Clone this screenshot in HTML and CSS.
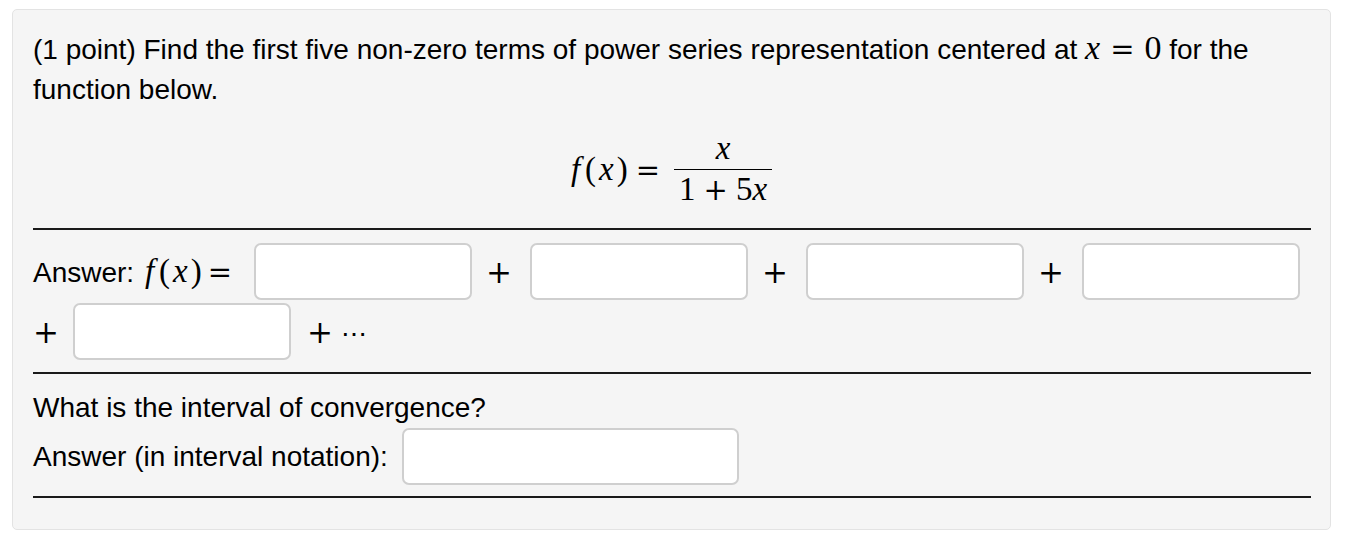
FILE: index.html
```html
<!DOCTYPE html>
<html>
<head>
<meta charset="utf-8">
<link rel="stylesheet" href="styles.css">
</head>
<body>
<div class="card">
  <p class="intro">(1 point) Find the first five non-zero terms of power series representation centered at <span class="m"><i>x</i><span class="op">=</span>0</span> for the function below.</p>
  <div class="display">
    <span class="m big"><i class="f">f</i>(<i class="px">x</i>)<span class="op">=</span></span>
    <span class="frac">
      <span class="num"><i>x</i></span>
      <span class="den">1<span class="op">+</span>5<i>x</i></span>
    </span>
  </div>
  <div class="rule"></div>
  <div class="row">
    <span class="label">Answer: <span class="m"><i class="f">f</i>(<i class="px">x</i>)<span class="op">=</span></span></span>
    <span class="box"></span>
    <span class="plus">+</span>
    <span class="box"></span>
    <span class="plus">+</span>
    <span class="box"></span>
    <span class="plus">+</span>
    <span class="box"></span>
  </div>
  <div class="row row2">
    <span class="plus first">+</span>
    <span class="box"></span>
    <span class="plus tail">+<span class="dots">⋯</span></span>
  </div>
  <div class="rule"></div>
  <p class="q">What is the interval of convergence?</p>
  <div class="row row3">
    <span class="label2">Answer (in interval notation):</span>
    <span class="box wide"></span>
  </div>
  <div class="rule"></div>
</div>
</body>
</html>
```

FILE: styles.css
```css
html, body {
  margin: 0;
  padding: 0;
  background: #ffffff;
}
body {
  padding: 9px 17px 14px 12px;
  font-family: "Liberation Sans", Arial, Helvetica, sans-serif;
  color: #000;
}
.card {
  background: #f5f5f5;
  border: 1px solid #e3e3e3;
  border-radius: 5px;
  padding: 18px 19px 31px 20px;
}
.intro {
  margin: 0;
  font-size: 28px;
  line-height: 40px;
}
.m {
  font-family: "Liberation Serif", "Times New Roman", serif;
  font-size: 33px;
  white-space: nowrap;
}
.intro .m {
  font-size: 34px;
}
.intro .op {
  padding: 0 10px;
}
.m i {
  font-style: italic;
}
.m i.f {
  padding: 0 5px 0 3px;
}
.m i.px {
  padding: 0 3px;
}
.op {
  font-family: "DejaVu Serif", "Liberation Serif", serif;
  font-size: 29px;
  padding: 0 8px;
}
.display {
  display: flex;
  justify-content: center;
  align-items: center;
  height: 118px;
  padding-right: 4px;
}
.display .m {
  margin-right: 6px;
}
.frac {
  display: inline-flex;
  flex-direction: column;
  align-items: stretch;
  font-family: "Liberation Serif", "Times New Roman", serif;
  font-size: 33px;
  text-align: center;
}
.frac i { font-style: italic; }
.num {
  border-bottom: 1.5px solid #000;
  padding: 0 4px 5px;
  line-height: 32px;
}
.den {
  padding: 2px 5px 0;
  line-height: 34px;
}
.den .op {
  padding: 0 8px;
}
.rule {
  height: 2px;
  background: #1a1a1a;
}
.row {
  display: flex;
  align-items: center;
  font-size: 28px;
  margin-top: 13px;
}
.row2 {
  margin-top: 3px;
  margin-bottom: 12px;
}
.label {
  width: 221px;
  white-space: nowrap;
}
.label .op {
  padding: 0 0 0 6px;
}
.box {
  width: 214px;
  height: 53px;
  background: #fff;
  border: 2px solid #cfcfcf;
  border-radius: 7px;
  flex: none;
}
.wide {
  width: 333px;
}
.plus {
  width: 58px;
  text-align: center;
  font-family: "DejaVu Serif", "Liberation Serif", serif;
  font-size: 31px;
  padding-right: 4px;
  box-sizing: border-box;
}
.plus.first {
  width: 40px;
  text-align: left;
  padding: 0;
}
.plus.tail {
  width: auto;
  padding-left: 16px;
  text-align: left;
}
.dots {
  font-family: "Liberation Serif", serif;
  font-size: 26px;
  padding-left: 8px;
}
.q {
  margin: 0;
  font-size: 28px;
  line-height: 38px;
  margin-top: 15px;
}
.row3 {
  margin-top: 1px;
  margin-bottom: 11px;
}
.label2 {
  width: 369px;
  white-space: nowrap;
}
```
